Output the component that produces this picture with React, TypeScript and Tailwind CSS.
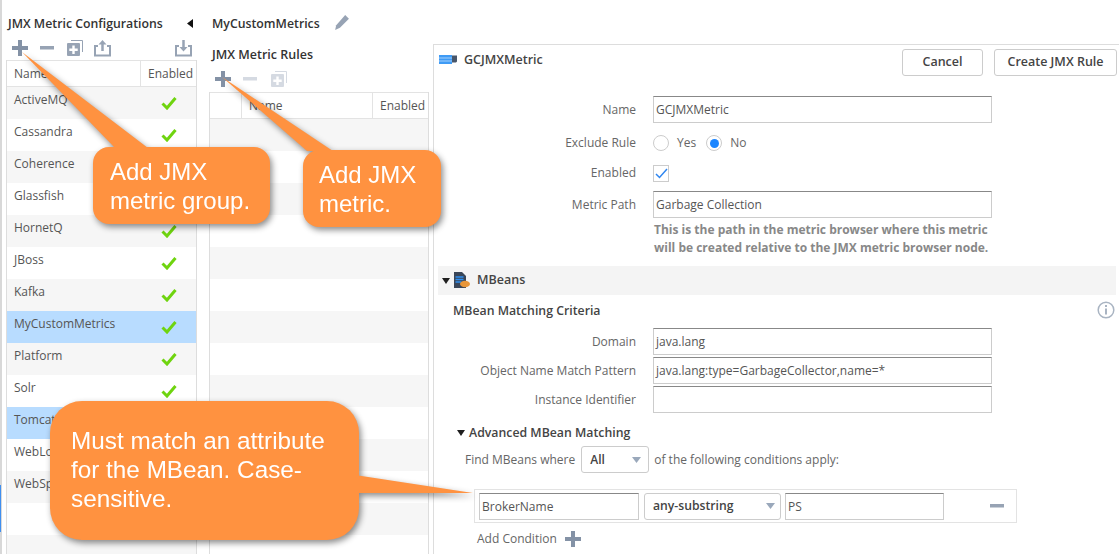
import React from 'react'

const configs = ['ActiveMQ','Cassandra','Coherence','Glassfish','HornetQ','JBoss','Kafka','MyCustomMetrics','Platform','Solr','Tomcat','WebLogic','WebSphere','','']

function PlusIcon({ className = '' }: { className?: string }){
  return <svg width="18" height="18" viewBox="0 0 18 18" className={className}><path d="M7 1h4v6h6v4h-6v6H7v-6H1V7h6z" fill="#8492a6"/></svg>
}
function MinusIcon({ light }: { light?: boolean }){
  return <svg width="16" height="18" viewBox="0 0 16 18"><rect x="1" y="7" width="14" height="3.5" fill={light ? '#d5dae2' : '#97a3b4'}/></svg>
}
function CopyIcon({ light }: { light?: boolean }){
  const c = light ? '#d5dae2' : '#97a3b4'
  return (
    <svg width="18" height="18" viewBox="0 0 18 18">
      <path d="M5 1.500h11.500V13" fill="none" stroke={c} strokeWidth="1"/>
      <rect x="1" y="4" width="13" height="13" rx="1" fill={c}/>
      <path d="M6.300 6.500h2.400v3h3v2.400h-3v3H6.300v-3h-3V9.500h3z" fill="#fff"/>
    </svg>
  )
}
function UploadIcon(){
  return (
    <svg width="19" height="18" viewBox="0 0 19 18" fill="none" stroke="#97a3b4">
      <path d="M5 7H2v9.500h15V7h-3" strokeWidth="2"/>
      <path d="M9.500 12V3" strokeWidth="2.500"/>
      <path d="M5.500 5.500l4-4.500 4 4.500z" fill="#97a3b4" stroke="none"/>
    </svg>
  )
}
function DownloadIcon(){
  return (
    <svg width="19" height="18" viewBox="0 0 19 18" fill="none" stroke="#97a3b4">
      <path d="M5 7H2v9.500h15V7h-3" strokeWidth="2"/>
      <path d="M9.500 1v8" strokeWidth="2.500"/>
      <path d="M5.500 8l4 4.500 4-4.500z" fill="#97a3b4" stroke="none"/>
    </svg>
  )
}
function Check(){
  return <svg width="16" height="14" viewBox="0 0 16 14"><path d="M1.500 7.500l4.500 4.500L14.500 2" fill="none" stroke="#6fd40f" strokeWidth="3"/></svg>
}
function Caret(){
  return <svg width="8" height="6" viewBox="0 0 8 6" className="shrink-0"><path d="M0 0h8L4 6z" fill="#1f1f1f"/></svg>
}
function SelectArrow(){
  return <svg width="9" height="6" viewBox="0 0 9 6"><path d="M0 0h9L4.500 6z" fill="#9aa8bb"/></svg>
}

function TextField({ value, w = 'w-[339px]' }: { value: string; w?: string }){
  return <div className={`${w} h-[27px] border border-[#ccc] border-t-[#888] px-[2px] text-[12px] leading-[25px] text-[#555] bg-white`}>{value}</div>
}

function FormRow({ label, children }: { label: string; children: React.ReactNode }){
  return (
    <div className="flex items-center">
      <div className="w-[198px] shrink-0 text-right text-[12px] text-[#666]">{label}</div>
      <div className="ml-[17px]">{children}</div>
    </div>
  )
}

function Callout({ className, tail, text, textClass }: { className: string; tail: React.ReactNode; text: React.ReactNode; textClass: string }){
  return (
    <div className="absolute inset-0 pointer-events-none drop-shadow-[2px_3px_3px_rgba(0,0,0,0.45)]">
      <svg width="1119" height="554" className="absolute inset-0">{tail}</svg>
      <div className={`absolute bg-[#ff9240] text-white font-['Liberation_Sans',sans-serif] ${className}`}>
        <div className={textClass}>{text}</div>
      </div>
    </div>
  )
}

export default function App(){
  return (
    <div className="relative w-[1119px] h-[554px] overflow-hidden bg-white font-['Open_Sans','Noto_Sans',sans-serif]">
      <div className="flex h-full border-l-2 border-[#d8d8d8]">
        {/* configurations list */}
        <div className="w-[195px] shrink-0 ml-[4px]">
          <div className="pl-[2px] pt-[15px] h-[35px] text-[12.3px] leading-[18px] font-semibold text-[#333]">
            <span>JMX Metric Configurations</span>
          </div>
          <div className="flex items-center h-[25px] pl-[5px] pr-[8px]">
            <PlusIcon />
            <span className="ml-[10px]"><MinusIcon /></span>
            <span className="ml-[11px]"><CopyIcon /></span>
            <span className="ml-[9px]"><UploadIcon /></span>
            <span className="ml-auto"><DownloadIcon /></span>
          </div>
          <div className="w-[191px] border-x border-[#ddd] text-[12px] text-[#555]">
            <div className="flex h-[27px] border-y border-[#e3e3e3]">
              <div className="flex-1 px-[7px] leading-[25px] border-r border-[#e3e3e3]">Name</div>
              <div className="w-[55px] pl-[7px] leading-[25px]">Enabled</div>
            </div>
            {configs.map((name, i) => (
              <div key={i} className={`flex h-[32px] ${name === 'MyCustomMetrics' || name === 'Tomcat' ? 'bg-[#b8dcff]' : i % 2 === 0 ? 'bg-[#f6f6f6]' : 'bg-white'}`}>
                <div className="flex-1 px-[7px] leading-[26px]">{name}</div>
                {name && <div className="w-[55px] flex justify-center pt-[9px]"><Check /></div>}
              </div>
            ))}
          </div>
        </div>

        {/* rules list */}
        <div className="w-[225px] shrink-0 ml-[9px]">
          <div className="relative h-[45px] pt-[15px] pl-[2px] text-[12.3px] leading-[18px] font-semibold text-[#333] flex items-start">
            <span>MyCustomMetrics</span>
            <svg width="17" height="17" viewBox="0 0 16 16" className="ml-[13px] -mt-[1px]"><path d="M11.500 1l3.500 3.500-8.500 8.500L2 15l1-4.500z" fill="#97a3b4"/></svg>
            <svg width="6" height="9" viewBox="0 0 6 9" className="absolute -left-[23px] top-[19px]"><path d="M6 0v9L0 4.500z" fill="#111"/></svg>
          </div>
          <div className="pl-[2px] h-[21px] pt-[1px] text-[12.5px] leading-[18px] font-semibold text-[#333]">JMX Metric Rules</div>
          <div className="flex items-center h-[26px] pl-[4px]">
            <PlusIcon />
            <span className="ml-[10px]"><MinusIcon light /></span>
            <span className="ml-[12px]"><CopyIcon light /></span>
          </div>
          <div className="w-[220px] -ml-[1px] border-x border-[#ddd] text-[12px] text-[#555]">
            <div className="flex h-[27px] border-y border-[#e3e3e3]">
              <div className="w-[32px] border-r border-[#e3e3e3]"></div>
              <div className="flex-1 px-[7px] leading-[25px] border-r border-[#e3e3e3]">Name</div>
              <div className="w-[55px] pl-[7px] leading-[25px]">Enabled</div>
            </div>
            {Array.from({ length: 14 }).map((_, i) => (
              <div key={i} className={`h-[32px] ${i % 2 === 0 ? 'bg-[#f6f6f6]' : 'bg-white'}`}></div>
            ))}
          </div>
        </div>

        {/* rule editor */}
        <div className="flex-1 mt-[44px] ml-[-2px] border-l border-t border-[#ddd] pl-[4px] pr-[3px]">
          <div className="flex items-start h-[51px]">
            <div className="flex items-center h-[30px] pl-[1px] text-[12.5px] font-semibold text-[#444]">
              <svg width="19" height="10" viewBox="0 0 19 10" className="mr-[6px]">
                <rect x="0" y="0" width="13" height="9" fill="#3f9bf5"/>
                <path d="M0 3h13M0 6h13" stroke="#bfe0ff" strokeWidth="0.800"/>
                <path d="M13 0.500h5v6l-1 1h-4z" fill="#48566a"/>
              </svg>
              GCJMXMetric
            </div>
            <button className="ml-auto mt-[4px] w-[81px] h-[27px] border border-[#ccc] rounded-[3px] text-[12.5px] font-semibold text-[#444]">Cancel</button>
            <button className="ml-[11px] mr-[-1px] mt-[4px] w-[123px] h-[27px] border border-[#ccc] rounded-[3px] text-[12.5px] font-semibold text-[#444]">Create JMX Rule</button>
          </div>

          <FormRow label="Name"><TextField value="GCJMXMetric" /></FormRow>
          <div className="mt-[7px]">
            <FormRow label="Exclude Rule">
              <div className="flex items-center h-[26px] text-[12px] text-[#666]">
                <span className="w-[16px] h-[16px] rounded-full border border-[#ccc] bg-white"></span>
                <span className="ml-[8px]">Yes</span>
                <span className="ml-[10px] w-[16px] h-[16px] rounded-full border border-[#ccc] flex items-center justify-center"><span className="w-[9px] h-[9px] rounded-full bg-[#1a85ff]"></span></span>
                <span className="ml-[8px]">No</span>
              </div>
            </FormRow>
          </div>
          <div className="mt-[8px]">
            <FormRow label="Enabled">
              <div className="h-[17px] w-[16px] border border-[#ccc] flex items-center justify-center">
                <svg width="13" height="11" viewBox="0 0 13 11"><path d="M1 6l3.500 3.500L12 1" fill="none" stroke="#2f86f0" strokeWidth="1.500"/></svg>
              </div>
            </FormRow>
          </div>
          <div className="mt-[9px]">
            <FormRow label="Metric Path"><TextField value="Garbage Collection" /></FormRow>
          </div>
          <div className="ml-[216px] mt-[3px] w-[345px] text-[12px] leading-[18px] font-bold text-[#888]">
            This is the path in the metric browser where this metric will be created relative to the JMX metric browser node.
          </div>

          <div className="flex items-center h-[29px] mt-[9px] bg-[#f4f4f4] pl-[4px] text-[12.5px] font-semibold text-[#444]">
            <Caret />
            <svg width="18" height="17" viewBox="0 0 18 17" className="ml-[3px] mr-[6px]">
              <path d="M1 0h8l4 4v12H1z" fill="#3a4658"/>
              <path d="M2.500 5h8M2.500 7.500h8M2.500 10h6" stroke="#2f8ff0" strokeWidth="1.300"/>
              <ellipse cx="12" cy="12" rx="5" ry="3.200" fill="#e8963a"/>
            </svg>
            MBeans
          </div>

          <div className="relative ml-[15px] mt-[6px] h-[21px] text-[12.3px] leading-[20px] font-semibold text-[#444]">
            MBean Matching Criteria
            <svg width="18" height="18" viewBox="0 0 18 18" className="absolute right-[1px] top-0">
              <circle cx="9" cy="9" r="7.800" fill="none" stroke="#a9b4c2" strokeWidth="1.500"/>
              <rect x="8" y="7.500" width="2" height="6" fill="#a9b4c2"/>
              <rect x="8" y="4" width="2" height="2" fill="#a9b4c2"/>
            </svg>
          </div>
          <div className="mt-[6px] flex flex-col gap-[2px]">
            <FormRow label="Domain"><TextField value="java.lang" /></FormRow>
            <FormRow label="Object Name Match Pattern"><TextField value="java.lang:type=GarbageCollector,name=*" /></FormRow>
            <FormRow label="Instance Identifier"><TextField value="" /></FormRow>
          </div>

          <div className="flex items-center ml-[19px] mt-[11px] h-[18px] text-[12.3px] font-semibold text-[#444]">
            <Caret />
            <span className="ml-[4px]">Advanced MBean Matching</span>
          </div>
          <div className="flex items-center ml-[27px] mt-[4px] h-[27px] text-[12px] text-[#666]">
            <span>Find MBeans where</span>
            <div className="ml-[6px] w-[68px] h-[27px] border border-[#ccc] rounded-[3px] flex items-center justify-between pl-[8px] pr-[7px] font-semibold text-[#444]">All<SelectArrow /></div>
            <span className="ml-[5px]">of the following conditions apply:</span>
          </div>
          <div className="flex items-center ml-[36px] mt-[16px] w-[543px] h-[34px] border border-[#e3e3e3] pl-[4px] pr-[11px] text-[12.2px]">
            <TextField value="BrokerName" w="w-[160px]" />
            <div className="ml-[5px] w-[137px] h-[27px] border border-[#ccc] rounded-[3px] flex items-center justify-between pl-[8px] pr-[5px] font-semibold text-[#444]">any-substring<SelectArrow /></div>
            <div className="ml-[4px]"><TextField value="PS" w="w-[159px]" /></div>
            <span className="ml-auto"><MinusIcon /></span>
          </div>
          <div className="flex items-center ml-[39px] mt-[6px] h-[20px] text-[12px] text-[#666]">
            Add Condition
            <span className="ml-[7px]"><PlusIcon /></span>
          </div>
        </div>
      </div>

      {/* blue edge left at the bottom of the page */}
      <div className="absolute left-0 top-[485px] w-[1px] h-[47px] bg-[#3f8ff0]"></div>

      <Callout
        className="left-[93px] top-[147px] w-[177px] h-[77px] rounded-[16px]"
        tail={<polygon points="22,52 148,148 115,148" fill="#ff9240" />}
        textClass="pl-[17px] pt-[10px] text-[24px] leading-[29px] whitespace-nowrap"
        text={<>Add JMX<br />metric group.</>}
      />
      <Callout
        className="left-[303px] top-[150px] w-[138px] h-[77px] rounded-[16px]"
        tail={<polygon points="222,77 333,151 307,151" fill="#ff9240" />}
        textClass="pl-[16px] pt-[10px] text-[24px] leading-[29px] whitespace-nowrap"
        text={<>Add JMX<br />metric.</>}
      />
      <Callout
        className="left-[50px] top-[401px] w-[309px] h-[139px] rounded-[32px]"
        tail={<polygon points="473,493 355,475 355,493" fill="#ff9240" />}
        textClass="pl-[21px] pt-[25px] text-[24.3px] leading-[29px]"
        text={<>Must match an attribute<br />for the MBean. Case-<br />sensitive.</>}
      />
    </div>
  )
}
